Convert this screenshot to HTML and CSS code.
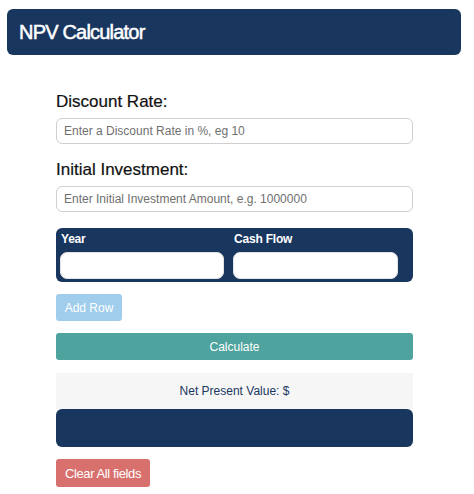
FILE: index.html
```html
<!DOCTYPE html>
<html lang="en">
<head>
<meta charset="utf-8">
<title>NPV Calculator</title>
<link rel="stylesheet" href="styles.css">
</head>
<body>
<header class="topbar"><h1 class="title">NPV Calculator</h1></header>
<main class="form">
  <label class="label" for="rate">Discount Rate:</label>
  <input class="field" id="rate" type="text" placeholder="Enter a Discount Rate in %, eg 10">
  <label class="label label-second" for="inv">Initial Investment:</label>
  <input class="field" id="inv" type="text" placeholder="Enter Initial Investment Amount, e.g. 1000000">
  <div class="table">
    <div class="th">Year</div>
    <div class="th">Cash Flow</div>
    <input class="cell" type="text">
    <input class="cell" type="text">
  </div>
  <button class="btn btn-add" type="button">Add Row</button>
  <button class="btn btn-calc" type="button">Calculate</button>
  <div class="result"><span class="result-text">Net Present Value: $</span></div>
  <div class="result-box"></div>
  <button class="btn btn-clear" type="button">Clear All fields</button>
</main>
</body>
</html>
```
FILE: styles.css
```css
* { box-sizing: border-box; }
html, body { margin: 0; padding: 0; background: #ffffff; }
body {
  font-family: "Liberation Sans", Arial, Helvetica, sans-serif;
  color: #111;
  width: 474px;
  height: 494px;
  overflow: hidden;
}
.topbar {
  margin: 9px 13px 0 7px;
  height: 46px;
  background: #19365f;
  border-radius: 6px;
  display: flex;
  align-items: center;
  padding-left: 12px;
}
.title {
  margin: 0;
  color: #fff;
  font-size: 20px;
  font-weight: 400;
  letter-spacing: -0.8px;
  line-height: 24px;
  -webkit-text-stroke: 0.5px #fff;
}
.form {
  margin-left: 56px;
  width: 357px;
  padding-top: 37px;
  display: flex;
  flex-direction: column;
}
.label {
  display: block;
  font-size: 17px;
  line-height: 20px;
  height: 20px;
  margin-bottom: 6px;
  color: #111;
  -webkit-text-stroke: 0.2px #111;
}
.label-second { margin-top: 16px; }
.field {
  display: block;
  width: 100%;
  height: 26px;
  border: 1px solid #cfcfcf;
  border-radius: 6px;
  padding: 0 7px;
  font-family: inherit;
  font-size: 12px;
  color: #333;
  background: #fff;
  outline: none;
}
.field::placeholder { color: #6f6f6f; }
.table {
  margin-top: 16px;
  background: #19365f;
  border-radius: 6px;
  padding: 4px 15px 3px 4px;
  display: grid;
  grid-template-columns: 164px 165px;
  column-gap: 9px;
}
.th {
  color: #fff;
  font-weight: 700;
  font-size: 12px;
  line-height: 14px;
  letter-spacing: -0.2px;
  padding-left: 1px;
  margin-bottom: 6px;
}
.cell {
  height: 27px;
  width: 100%;
  border: 1px solid #e3e3e3;
  border-radius: 7px;
  background: #fff;
  outline: none;
}
.btn {
  border: none;
  color: #fff;
  font-family: inherit;
  font-size: 12px;
  border-radius: 3px;
  padding: 0;
  margin-top: 12px;
  cursor: pointer;
}
.btn-add {
  width: 66px;
  height: 27px;
  background: #9fcdeb;
}
.btn-calc {
  width: 100%;
  height: 27px;
  background: #4ea39e;
}
.result {
  margin-top: 13px;
  height: 36px;
  background: #f6f6f6;
  display: flex;
  align-items: center;
  justify-content: center;
}
.result-text {
  color: #1b375f;
  font-size: 12px;
}
.result-box {
  height: 38px;
  background: #19365f;
  border-radius: 6px;
}
.btn-clear {
  width: 94px;
  height: 28px;
  background: #d8706e;
  font-size: 13px;
  letter-spacing: -0.4px;
}
```
